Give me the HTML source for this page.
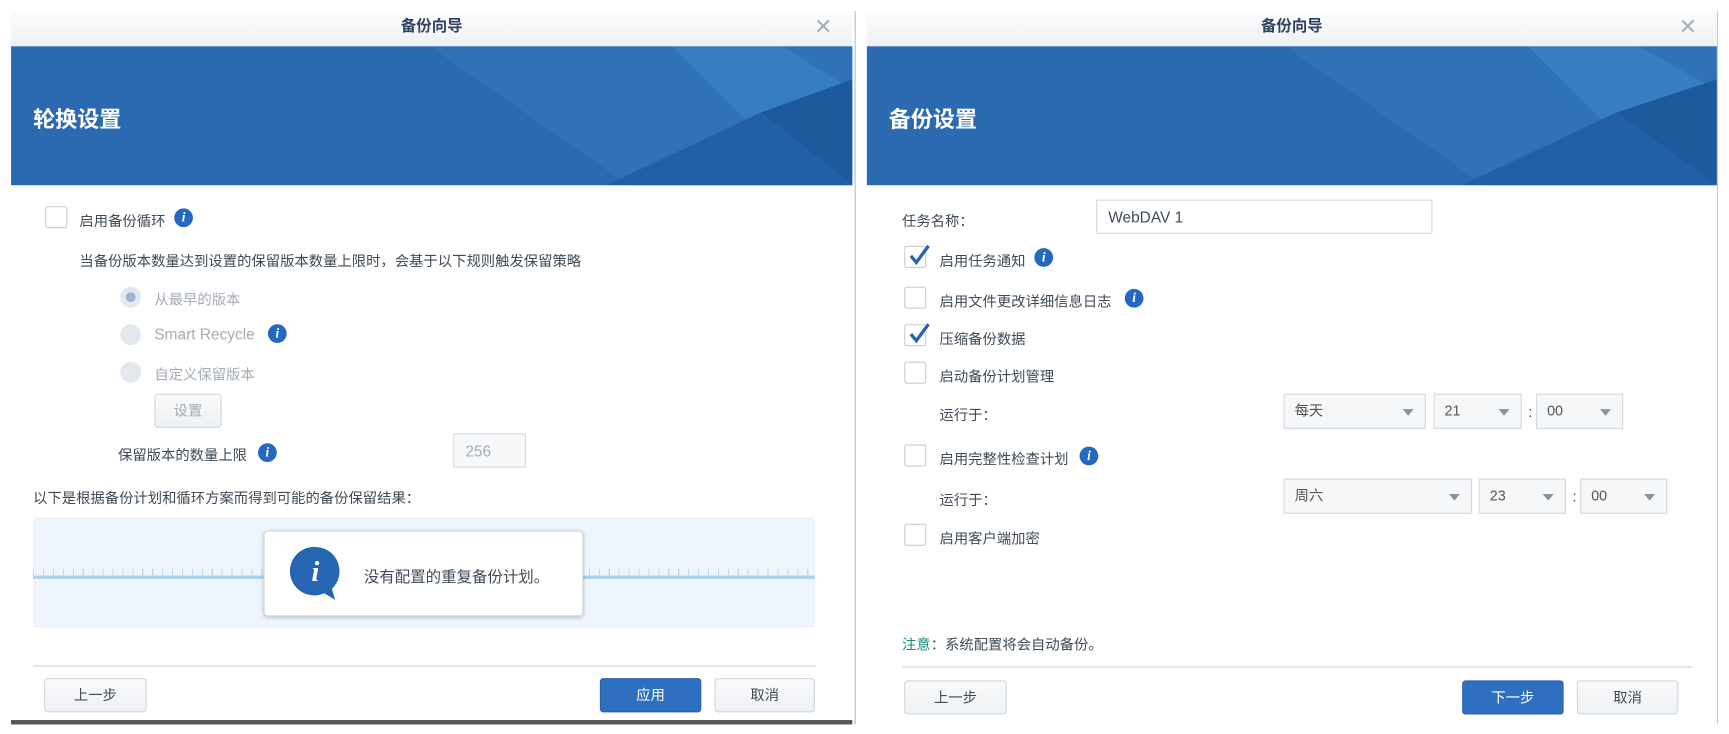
<!DOCTYPE html>
<html><head><meta charset="utf-8"><style>
*{box-sizing:border-box;margin:0;padding:0}
html,body{width:1729px;height:734px;overflow:hidden;background:#fff;font-family:"Liberation Sans","Noto Sans CJK SC",sans-serif;color:#414b55}
#s{position:absolute;left:0;top:0;width:1568px;height:666px;transform:scale(1.1027);transform-origin:0 0}
.a{position:absolute;white-space:nowrap}
.panel{position:absolute;top:10px;height:647px;background:#fff;overflow:hidden}
.tb{position:absolute;left:0;right:0;top:0;height:32px;background:linear-gradient(#fdfdfe,#eef1f4);text-align:center;font-size:14px;font-weight:bold;color:#2e4361;line-height:26px}
.x{position:absolute;right:18px;top:2px;font-size:20px;color:#a9b1ba;font-weight:normal}
.bn{position:absolute;left:0;right:0;top:32px;height:126px;background:#2b69b0;overflow:hidden}
.bn h1{position:absolute;left:20px;top:50px;font-size:20px;color:#fff;font-weight:bold}
.cb{position:absolute;width:20px;height:20px;border:1px solid #c7ced6;border-radius:2px;background:#fff}
.t{font-size:13px;color:#3f4a56}
.info{position:absolute;width:17px;height:17px;border-radius:50%;background:#2468bf;color:#fff;font:italic bold 12px "Liberation Serif",serif;text-align:center;line-height:17px}
.rd{position:absolute;width:19px;height:19px;border-radius:50%;background:#e3e8ee}
.btn{position:absolute;height:31px;border:1px solid #cfd6de;border-radius:3px;background:linear-gradient(#f9fafb,#eef1f4);font-size:13px;text-align:center;line-height:29px;color:#414b55}
.bl{background:#2f6fbf;border-color:#2a62aa;color:#fff}
.sel{position:absolute;height:32px;border:1px solid #d3d9e0;background:#f6f7f9;font-size:13px;line-height:30px;padding-left:9px;color:#555}
.sel:after{content:"";position:absolute;right:10px;top:13px;border:5px solid transparent;border-top:6px solid #8a939d}
.ck{position:absolute;left:3px;top:-3px;width:20px;height:20px}
</style></head><body><div id="s">

<!-- LEFT -->
<div class="panel" style="left:10px;width:763px">
 <div class="tb">备份向导<span class="x">✕</span></div>
 <div class="bn">
  <svg width="763" height="126" style="position:absolute;left:0;top:0">
   <polygon points="380,0 763,0 763,126 560,126" fill="#2f72b8"/>
   <polygon points="600,0 700,0 763,40 680,80" fill="#3a82c4" opacity=".7"/>
   <polygon points="540,126 680,60 763,126" fill="#2160a6"/>
   <polygon points="680,60 763,30 763,126" fill="#1d5a9c"/>
  </svg>
  <h1>轮换设置</h1>
 </div>
 <div class="cb" style="left:31px;top:177px"></div>
 <div class="a t" style="left:62px;top:180px">启用备份循环</div>
 <div class="info" style="left:148px;top:179px">i</div>
 <div class="a t" style="left:62px;top:216px">当备份版本数量达到设置的保留版本数量上限时，会基于以下规则触发保留策略</div>
 <div class="rd" style="left:99px;top:250px"><div style="position:absolute;left:5px;top:5px;width:9px;height:9px;border-radius:50%;background:#9db4cf"></div></div>
 <div class="a t" style="left:130px;top:251px;color:#a4acb5">从最早的版本</div>
 <div class="rd" style="left:99px;top:284px"></div>
 <div class="a t" style="left:130px;top:285px;color:#a4acb5;font-size:14px">Smart Recycle</div>
 <div class="info" style="left:233px;top:284px">i</div>
 <div class="rd" style="left:99px;top:318px"></div>
 <div class="a t" style="left:130px;top:319px;color:#a4acb5">自定义保留版本</div>
 <div class="btn" style="left:130px;top:347px;width:61px;color:#a4acb5">设置</div>
 <div class="a t" style="left:97px;top:392px">保留版本的数量上限</div>
 <div class="info" style="left:224px;top:392px">i</div>
 <div class="a" style="left:401px;top:383px;width:66px;height:31px;border:1px solid #d6dce2;background:#f7f8fa;font-size:14px;color:#a4acb5;padding:7px 10px">256</div>
 <div class="a t" style="left:20px;top:431px">以下是根据备份计划和循环方案而得到可能的备份保留结果：</div>
 <div class="a" style="left:20px;top:459px;width:709px;height:100px;background:#eef5fc">
  <div style="position:absolute;left:0;right:0;top:53px;height:3px;background:#a9d2ef"></div>
  <div style="position:absolute;left:0;right:0;top:47px;height:6px;background:repeating-linear-gradient(90deg,#b9d9f1 0 1px,transparent 1px 9px)"></div>
 </div>
 <div class="a" style="left:229px;top:471px;width:290px;height:78px;background:#fff;border:1px solid #cfd6dd;border-radius:4px;box-shadow:0 1px 4px rgba(0,0,0,.2)">
  <svg width="50" height="52" style="position:absolute;left:22px;top:12px"><path d="M24 2a22 22 0 1 0 8 42l10 6-3-10A22 22 0 0 0 24 2z" fill="#2565b1"/><text x="24" y="33" fill="#fff" font-family="Liberation Serif" font-style="italic" font-weight="bold" font-size="26" text-anchor="middle">i</text></svg>
  <div class="a t" style="left:90px;top:31px;font-size:14px">没有配置的重复备份计划。</div>
 </div>
 <div class="a" style="left:20px;top:593px;width:710px;height:2px;background:#e4e8ec"></div>
 <div class="btn" style="left:30px;top:605px;width:93px">上一步</div>
 <div class="btn bl" style="left:534px;top:605px;width:92px">应用</div>
 <div class="btn" style="left:638px;top:605px;width:91px">取消</div>
 <div class="a" style="left:0;top:643px;width:763px;height:4px;background:#555"></div>
</div>
<div class="a" style="left:775px;top:10px;width:1px;height:647px;background:#bbb"></div>

<!-- RIGHT -->
<div class="panel" style="left:786px;width:771px">
 <div class="tb">备份向导<span class="x">✕</span></div>
 <div class="bn">
  <svg width="771" height="126" style="position:absolute;left:0;top:0">
   <polygon points="380,0 771,0 771,126 560,126" fill="#2f72b8"/>
   <polygon points="600,0 700,0 771,40 680,80" fill="#3a82c4" opacity=".7"/>
   <polygon points="540,126 680,60 771,126" fill="#2160a6"/>
   <polygon points="680,60 771,30 771,126" fill="#1d5a9c"/>
  </svg>
  <h1>备份设置</h1>
 </div>
 <div class="a t" style="left:32px;top:180px">任务名称：</div>
 <div class="a" style="left:208px;top:171px;width:305px;height:31px;border:1px solid #d3d9e0;font-size:14px;padding:7px 10px;color:#3f4a56">WebDAV 1</div>

 <div class="cb" style="left:34px;top:213px"><svg class="ck" viewBox="0 0 20 20"><path d="M2 11l5 6L18 2" fill="none" stroke="#2565b1" stroke-width="3"/></svg></div>
 <div class="a t" style="left:66px;top:216px">启用任务通知</div><div class="info" style="left:152px;top:215px">i</div>
 <div class="cb" style="left:34px;top:250px"></div>
 <div class="a t" style="left:66px;top:253px">启用文件更改详细信息日志</div><div class="info" style="left:234px;top:252px">i</div>
 <div class="cb" style="left:34px;top:284px"><svg class="ck" viewBox="0 0 20 20"><path d="M2 11l5 6L18 2" fill="none" stroke="#2565b1" stroke-width="3"/></svg></div>
 <div class="a t" style="left:66px;top:287px">压缩备份数据</div>
 <div class="cb" style="left:34px;top:318px"></div>
 <div class="a t" style="left:66px;top:321px">启动备份计划管理</div>
 <div class="a t" style="left:66px;top:356px">运行于：</div>
 <div class="sel" style="left:378px;top:347px;width:129px">每天</div>
 <div class="sel" style="left:514px;top:347px;width:80px">21</div>
 <div class="a t" style="left:600px;top:356px">:</div>
 <div class="sel" style="left:607px;top:347px;width:79px">00</div>
 <div class="cb" style="left:34px;top:393px"></div>
 <div class="a t" style="left:66px;top:396px">启用完整性检查计划</div><div class="info" style="left:193px;top:395px">i</div>
 <div class="a t" style="left:66px;top:433px">运行于：</div>
 <div class="sel" style="left:378px;top:424px;width:171px">周六</div>
 <div class="sel" style="left:555px;top:424px;width:79px">23</div>
 <div class="a t" style="left:640px;top:433px">:</div>
 <div class="sel" style="left:647px;top:424px;width:79px">00</div>
 <div class="cb" style="left:34px;top:465px"></div>
 <div class="a t" style="left:66px;top:468px">启用客户端加密</div>
 <div class="a t" style="left:32px;top:564px"><span style="color:#1a8a7a">注意</span>：系统配置将会自动备份。</div>
 <div class="a" style="left:32px;top:594px;width:717px;height:2px;background:#e4e8ec"></div>
 <div class="btn" style="left:34px;top:607px;width:93px">上一步</div>
 <div class="btn bl" style="left:540px;top:607px;width:92px">下一步</div>
 <div class="btn" style="left:644px;top:607px;width:92px">取消</div>
</div>
<div class="a" style="left:1557px;top:10px;width:1px;height:647px;background:#ccc"></div>
</div></body></html>
